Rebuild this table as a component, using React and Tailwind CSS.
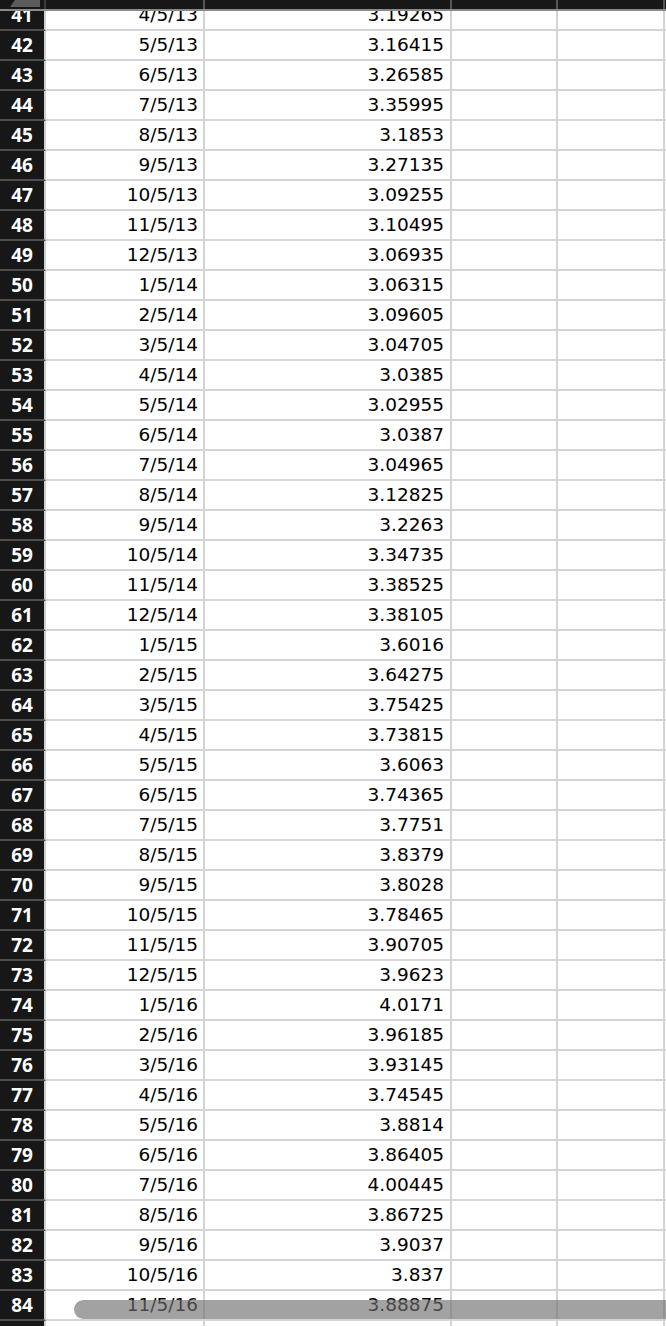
import React from "react";

const rows = [
  [41, "4/5/13", "3.19265"],
  [42, "5/5/13", "3.16415"],
  [43, "6/5/13", "3.26585"],
  [44, "7/5/13", "3.35995"],
  [45, "8/5/13", "3.1853"],
  [46, "9/5/13", "3.27135"],
  [47, "10/5/13", "3.09255"],
  [48, "11/5/13", "3.10495"],
  [49, "12/5/13", "3.06935"],
  [50, "1/5/14", "3.06315"],
  [51, "2/5/14", "3.09605"],
  [52, "3/5/14", "3.04705"],
  [53, "4/5/14", "3.0385"],
  [54, "5/5/14", "3.02955"],
  [55, "6/5/14", "3.0387"],
  [56, "7/5/14", "3.04965"],
  [57, "8/5/14", "3.12825"],
  [58, "9/5/14", "3.2263"],
  [59, "10/5/14", "3.34735"],
  [60, "11/5/14", "3.38525"],
  [61, "12/5/14", "3.38105"],
  [62, "1/5/15", "3.6016"],
  [63, "2/5/15", "3.64275"],
  [64, "3/5/15", "3.75425"],
  [65, "4/5/15", "3.73815"],
  [66, "5/5/15", "3.6063"],
  [67, "6/5/15", "3.74365"],
  [68, "7/5/15", "3.7751"],
  [69, "8/5/15", "3.8379"],
  [70, "9/5/15", "3.8028"],
  [71, "10/5/15", "3.78465"],
  [72, "11/5/15", "3.90705"],
  [73, "12/5/15", "3.9623"],
  [74, "1/5/16", "4.0171"],
  [75, "2/5/16", "3.96185"],
  [76, "3/5/16", "3.93145"],
  [77, "4/5/16", "3.74545"],
  [78, "5/5/16", "3.8814"],
  [79, "6/5/16", "3.86405"],
  [80, "7/5/16", "4.00445"],
  [81, "8/5/16", "3.86725"],
  [82, "9/5/16", "3.9037"],
  [83, "10/5/16", "3.837"],
  [84, "11/5/16", "3.88875"],
  [85, "", ""],
];

function Row({ n, date, value }) {
  return (
    <div className="flex h-[30px] shrink-0">
      <div className="w-[46px] shrink-0 bg-[#171717] border-b-2 border-b-[#4f4f4f] border-r-2 border-r-[#cfcfcf] flex items-center justify-center text-white font-bold text-[19px] font-['Open_Sans',sans-serif]">
        {n === 85 ? "" : n}
      </div>
      <div className="w-[159px] shrink-0 border-b-2 border-r-2 border-[#d4d4d4] flex items-center justify-end pr-[5px] text-black text-[18.5px]">
        {date}
      </div>
      <div className="w-[247px] shrink-0 border-b-2 border-r-2 border-[#d4d4d4] flex items-center justify-end pr-[6px] text-black text-[18.5px]">
        {value}
      </div>
      <div className="w-[106px] shrink-0 border-b-2 border-r-2 border-[#d4d4d4]" />
      <div className="w-[107px] shrink-0 border-b-2 border-r-2 border-[#d4d4d4]" />
      <div className="flex-1 border-b-2 border-[#d4d4d4]" />
    </div>
  );
}

export default function App() {
  return (
    <div className="relative w-[666px] h-[1326px] overflow-hidden bg-white font-['DejaVu_Sans',sans-serif]">
      <div className="flex flex-col pt-px">
        {rows.map(([n, d, v]) => (
          <Row key={n} n={n} date={d} value={v} />
        ))}
      </div>

      {/* sticky column header strip */}
      <div className="absolute top-0 left-0 right-0 h-[11px] flex bg-[#171717] border-b-2 border-[#8a8a8a]">
        <div className="relative w-[46px] shrink-0 border-r-2 border-[#3c3c3c]">
          <svg width="44" height="9" className="absolute top-0 left-0">
            <polygon points="10,7 40,7 40,0 15,0" fill="#5c5c5c" />
          </svg>
        </div>
        <div className="w-[159px] shrink-0 border-r-2 border-[#555]" />
        <div className="w-[247px] shrink-0 border-r-2 border-[#555]" />
        <div className="w-[106px] shrink-0 border-r-2 border-[#555]" />
        <div className="w-[107px] shrink-0 border-r-2 border-[#555]" />
        <div className="flex-1" />
      </div>

      {/* overlay horizontal scrollbar */}
      <div className="absolute left-[74px] right-[-20px] top-[1300px] h-[19px] rounded-full bg-[rgba(110,110,110,0.64)]" />
    </div>
  );
}
